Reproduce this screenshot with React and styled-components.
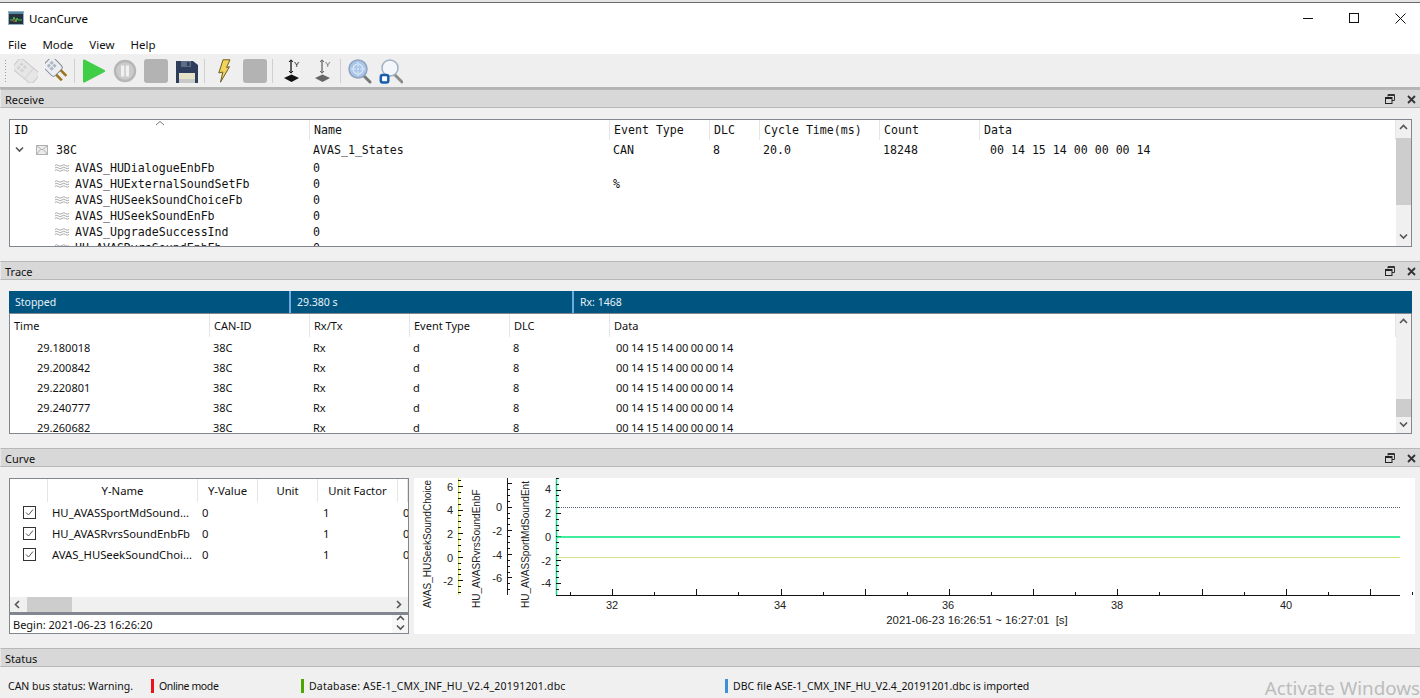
import React from 'react';
import styled, { createGlobalStyle } from 'styled-components';

const uiFont = `"Noto Sans", "Open Sans", "Liberation Sans", sans-serif`;
const monoFont = `"DejaVu Sans Mono", "Liberation Mono", monospace`;
const chartFont = `"Liberation Sans", Arial, sans-serif`;

const GlobalStyle = createGlobalStyle`
  html, body { margin: 0; padding: 0; background: #f0f0f0; }
  body { font-family: ${uiFont}; font-size: 11px; color: #111; overflow: hidden; }
`;

const Window = styled.div`
  position: relative;
  width: 1420px;
  height: 698px;
  overflow: hidden;
  background: #f0f0f0;
`;

const DesktopStrip = styled.div`
  height: 3px;
  box-sizing: border-box;
  background: #e4e4e4;
  border-bottom: 1px solid #6a6a6a;
`;

const TitleBar = styled.div`
  height: 30px;
  background: #fff;
  display: flex;
  align-items: center;
  padding-left: 8px;
`;

const TitleText = styled.span`
  margin-left: 5px;
  font-size: 11.5px;
  color: #000;
`;

const WindowButtons = styled.div`
  margin-left: auto;
  margin-right: -3px;
  display: flex;
`;

const WindowButton = styled.div`
  width: 46px;
  height: 30px;
  display: flex;
  align-items: center;
  justify-content: center;
`;

const MenuBar = styled.div`
  height: 22px;
  box-sizing: border-box;
  padding: 1px 0 0 8px;
  background: #fff;
  display: flex;
  align-items: center;
  gap: 16px;
  font-size: 11.5px;
  border-bottom: 1px solid #f0f0f0;
`;

const Toolbar = styled.div`
  height: 34px;
  display: flex;
  align-items: center;
  padding-left: 4px;
  box-sizing: border-box;
  border-bottom: 2px solid #b4b4b4;
  background: #efefef;
`;

const Grip = styled.div`
  width: 3px;
  height: 24px;
  margin-right: 3px;
  background-image: radial-gradient(#9a9a9a 1px, transparent 1px);
  background-size: 3px 3px;
`;

const ToolButton = styled.div`
  width: 31px;
  height: 28px;
  display: flex;
  align-items: center;
  justify-content: center;
`;

const ToolSeparator = styled.div`
  width: 1px;
  height: 24px;
  margin: 0 3px 0 2px;
  background: #cfcfcf;
`;

const DockHeader = styled.div`
  height: 19px;
  box-sizing: border-box;
  display: flex;
  align-items: center;
  padding: 1px 3px 0 4px;
  background: #d8d8d8;
  border-top: 1px solid #b8b8b8;
  border-bottom: 1px solid #b8b8b8;
  border-left: 1px solid #e8e8e8;
  font-size: 11px;
  color: #111;
`;

const DockControls = styled.div`
  margin-left: auto;
  display: flex;
  align-items: center;
  gap: 12px;
  padding-right: 1px;
`;

const DockBody = styled.div`
  height: ${p => p.$h}px;
  box-sizing: border-box;
  padding: ${p => p.$pad || '11px 8px 14px 9px'};
`;

const Frame = styled.div`
  height: ${p => (p.$h ? `${p.$h}px` : '100%')};
  box-sizing: border-box;
  border: 1px solid #82878f;
  background: #fff;
  display: flex;
  flex-direction: ${p => (p.$column ? 'column' : 'row')};
  overflow: hidden;
`;

const TableArea = styled.div`
  flex: 1;
  min-width: 0;
  min-height: 0;
  overflow: hidden;
  position: relative;
`;

const Row = styled.div`
  display: grid;
  grid-template-columns: ${p => p.$cols};
  height: ${p => p.$h}px;
  align-items: center;
  font-family: ${p => (p.$mono ? monoFont : uiFont)};
  font-size: ${p => (p.$mono ? '11.6px' : p.$size || '11px')};
  white-space: pre;
`;

const HeadCell = styled.div`
  height: 100%;
  box-sizing: border-box;
  display: flex;
  align-items: center;
  justify-content: ${p => (p.$center ? 'center' : 'flex-start')};
  padding-left: ${p => (p.$center ? 0 : 4)}px;
  border-right: 1px solid #e6e6e6;
  overflow: hidden;
`;

const Cell = styled.div`
  padding-left: ${p => p.$pl ?? 3}px;
  overflow: hidden;
  display: flex;
  align-items: center;
`;

const HexCell = styled(Cell)`
  word-spacing: -0.5px;
`;

const Spacer = styled.span`
  width: ${p => p.$w}px;
  flex: none;
`;

const SortMark = styled.svg`
  position: absolute;
  left: 145px;
  top: 0;
`;

const VScroll = styled.div`
  width: 15px;
  flex: none;
  background: #f0f0f0;
  display: flex;
  flex-direction: column;
  align-items: center;
`;

const ScrollEnd = styled.div`
  height: 17px;
  width: 100%;
  flex: none;
  display: flex;
  align-items: center;
  justify-content: center;
`;

const ScrollTrack = styled.div`
  flex: 1;
  width: 100%;
  padding-top: ${p => p.$top}px;
  box-sizing: border-box;
`;

const ScrollThumb = styled.div`
  width: 100%;
  height: ${p => p.$h}px;
  background: #cdcdcd;
`;

const TraceBar = styled.div`
  height: 22px;
  display: grid;
  grid-template-columns: 280px 283px 1fr;
  align-items: center;
  background: #005580;
  color: #e8f2f8;
  font-size: 10.5px;
  box-sizing: border-box;
`;

const TraceField = styled.div`
  height: 100%;
  padding-left: 6px;
  display: flex;
  align-items: center;
  box-sizing: border-box;
  ${p => !p.$first && 'border-left: 2px solid #6fa8dc;'}
`;

const CurveSplit = styled.div`
  display: flex;
  height: 156px;
  gap: 5px;
`;

const CurveLeft = styled.div`
  width: 400px;
  flex: none;
  display: flex;
  flex-direction: column;
`;

const CheckBox = styled.div`
  width: 11px;
  height: 11px;
  border: 1px solid #333;
  background: #fff;
  margin-left: 13px;
  display: flex;
  align-items: center;
  justify-content: center;
`;

const CurveRows = styled.div`
  overflow: hidden;
  box-sizing: border-box;
  width: 420px;
`;

const HScroll = styled.div`
  height: 15px;
  flex: none;
  background: #f0f0f0;
  display: flex;
  align-items: center;
`;

const HEnd = styled.div`
  width: 17px;
  height: 100%;
  flex: none;
  display: flex;
  align-items: center;
  justify-content: center;
  ${p => p.$end && 'margin-left: auto;'}
`;

const HThumb = styled.div`
  width: 45px;
  height: 100%;
  background: #cdcdcd;
`;

const BeginBox = styled.div`
  height: 21px;
  box-sizing: border-box;
  border: 1px solid #82878f;
  border-top-width: 2px;
  background: #fff;
  display: flex;
  align-items: center;
  padding-left: 3px;
  font-size: 11px;
  overflow: hidden;
`;

const Spinner = styled.div`
  margin-left: auto;
  width: 16px;
  height: 100%;
  display: flex;
  flex-direction: column;
  align-items: center;
  justify-content: space-between;
  background: #f7f7f7;
`;

const ChartPanel = styled.div`
  flex: 1;
  background: #fff;
  overflow: hidden;
`;

const StatusRow = styled.div`
  height: 31px;
  display: flex;
  align-items: center;
  font-size: 10.5px;
  padding-top: 6px;
  box-sizing: border-box;
`;

const StatusItem = styled.div`
  width: ${p => p.$w}px;
  box-sizing: border-box;
  flex: none;
  display: flex;
  align-items: center;
  height: 14px;
  padding-left: ${p => (p.$color ? 5 : 8)}px;
  letter-spacing: ${p => p.$spacing || 0}px;
  ${p => p.$color && `border-left: 3px solid ${p.$color};`}
  white-space: nowrap;
`;

const Watermark = styled.div`
  position: absolute;
  right: 0;
  top: 675px;
  font-size: 18.8px;
  color: #bcbcbc;
  white-space: nowrap;
`;

const AppIcon = () => (
  <svg width="16" height="14" viewBox="0 0 16 14">
    <rect x="0" y="0" width="16" height="14" fill="#8fb4c8" />
    <rect x="1" y="1" width="14" height="12" fill="#26323c" />
    <rect x="1" y="1" width="14" height="2" fill="#5b87a3" />
    <path d="M2 9h3l1-3 2 5 1-4 1 2h4" stroke="#49c24a" strokeWidth="1" fill="none" />
    <path d="M5 9l1 2 2-3" stroke="#d9433c" strokeWidth="0.8" fill="none" />
  </svg>
);

const MinIcon = () => (
  <svg width="10" height="10"><path d="M0 5.5h10" stroke="#111" strokeWidth="1" /></svg>
);
const MaxIcon = () => (
  <svg width="10" height="10"><rect x="0.5" y="0.5" width="9" height="9" fill="none" stroke="#111" /></svg>
);
const CloseIcon = () => (
  <svg width="11" height="11"><path d="M0.5 0.5l10 10M10.5 0.5l-10 10" stroke="#111" strokeWidth="1" /></svg>
);

const FloatIcon = () => (
  <svg width="10" height="10" viewBox="0 0 10 10">
    <path d="M3 2.5V.5h6.5v6H7" fill="none" stroke="#333" />
    <path d="M3 1.5h6" stroke="#333" />
    <rect x="0.5" y="3.5" width="6.5" height="6" fill="none" stroke="#222" />
    <path d="M0.5 4.5h6.5" stroke="#222" />
  </svg>
);
const DockClose = () => (
  <svg width="9" height="9" viewBox="0 0 9 9">
    <path d="M1 1l7 7M8 1L1 8" stroke="#333" strokeWidth="1.8" />
  </svg>
);

const Chevron = ({ dir = 'down', color = '#555' }) => {
  const paths = {
    down: 'M1 1.5l3.5 3.5 3.5-3.5',
    up: 'M1 5l3.5-3.5L8 5',
    left: 'M5 1L1.5 4.5 5 8',
    right: 'M2 1l3.5 3.5L2 8',
  };
  return (
    <svg width="9" height="9" viewBox="0 0 9 9" style={{ display: 'block' }}>
      <path d={paths[dir]} fill="none" stroke={color} strokeWidth="1.6" />
    </svg>
  );
};

const PlugGrey = () => (
  <svg width="24" height="24" viewBox="0 0 24 24">
    <g transform="rotate(-50 12 12)">
      <rect x="5" y="-1" width="14" height="26" rx="4" fill="#e6e6e6" stroke="#cacaca" />
      <rect x="8.5" y="3" width="7" height="7" fill="#d2d2d2" />
      <path d="M12 3v7M8.5 6.5h7" stroke="#f2f2f2" />
      <path d="M5.5 16h13" stroke="#d4d4d4" />
    </g>
  </svg>
);

const PlugColor = () => (
  <svg width="24" height="24" viewBox="0 0 24 24">
    <g transform="rotate(-45 12 12)">
      <rect x="5" y="-2" width="14" height="16" rx="3" fill="#eceef1" stroke="#808a98" />
      <rect x="8.5" y="1" width="7" height="7" fill="#aeb6c2" />
      <path d="M12 1v7M8.5 4.5h7" stroke="#eef0f3" />
      <rect x="7.5" y="14" width="2.6" height="8" fill="#9a7420" />
      <rect x="13.9" y="14" width="2.6" height="8" fill="#9a7420" />
    </g>
  </svg>
);

const PlayIcon = () => (
  <svg width="24" height="26" viewBox="0 0 24 26">
    <path d="M1 2.5c0-1 1-1.4 2-.8l19.500 10.300c.9.500.9 1.500 0 2L3 24.300c-1 .6-2 .2-2-.8z" fill="#3fce46" />
  </svg>
);

const PauseIcon = () => (
  <svg width="24" height="24" viewBox="0 0 24 24">
    <circle cx="12" cy="12" r="10" fill="#cbcbcb" stroke="#b6b6b6" strokeWidth="2.4" />
    <rect x="8" y="6.5" width="3.2" height="11" fill="#f1f1f1" />
    <rect x="12.8" y="6.5" width="3.2" height="11" fill="#f1f1f1" />
  </svg>
);

const StopIcon = () => (
  <svg width="24" height="24" viewBox="0 0 24 24">
    <rect x="0" y="0" width="24" height="24" rx="3" fill="#b3b3b3" />
  </svg>
);

const SaveIcon = () => (
  <svg width="22" height="23" viewBox="0 0 22 23">
    <path d="M0 1h17l5 4v18H0z" fill="#2e3d5c" />
    <rect x="5" y="1" width="10" height="6" fill="#5e6b85" />
    <rect x="11" y="2" width="2.5" height="4" fill="#2e3d5c" />
    <rect x="3" y="13" width="16" height="10" fill="#e6e2c8" />
    <rect x="3" y="19" width="16" height="4" fill="#c9c9c9" />
  </svg>
);

const BoltIcon = () => (
  <svg width="14" height="24" viewBox="0 0 14 24">
    <path d="M6 .8h7L9.5 8.5l3-.8L3.5 23.200 5.800 13 1.800 14z" fill="#f2d45c" stroke="#6e5c22" strokeWidth="1" />
  </svg>
);

const YAxisIcon = ({ color }) => (
  <svg width="16" height="24" viewBox="0 0 16 24">
    <path d="M7 1v13" stroke={color} strokeWidth="1.3" />
    <path d="M5 3l2-2.200 2 2.200M5 12l2 2.200 2-2.200" fill="none" stroke={color} strokeWidth="1" />
    <text x="10" y="8" fill={color} style={{ fontFamily: chartFont, fontSize: 8 }}>Y</text>
    <path d="M0 19l7.500-3.500L15 19l-7.500 4z" fill={color} />
  </svg>
);

const ZoomInIcon = () => (
  <svg width="24" height="25" viewBox="0 0 24 25">
    <path d="M15 16l7 7" stroke="#777" strokeWidth="3" strokeLinecap="round" />
    <circle cx="10" cy="10" r="9" fill="#a9c6ea" stroke="#8fa4bf" strokeWidth="1.5" />
    <circle cx="10" cy="10" r="5" fill="none" stroke="#dfe9f6" strokeWidth="1.2" />
    <path d="M3 10h14M10 3v14" stroke="#dfe9f6" strokeWidth="1" strokeDasharray="2 1" />
  </svg>
);

const ZoomOutIcon = () => (
  <svg width="24" height="25" viewBox="0 0 24 25">
    <path d="M15 15l8 8" stroke="#8b8b8b" strokeWidth="3" strokeLinecap="round" />
    <circle cx="11" cy="9" r="8" fill="#f3f6fa" stroke="#9fb0c6" strokeWidth="1.5" />
    <rect x="1.8" y="16" width="7.5" height="7.5" rx="2" fill="#fff" stroke="#1a5fae" strokeWidth="2.5" />
  </svg>
);

const MessageIcon = () => (
  <svg width="12" height="10" viewBox="0 0 12 10" style={{ display: 'block' }}>
    <rect x="0.5" y="0.5" width="11" height="9" fill="#ececec" stroke="#b0b0b0" />
    <path d="M.5 .5l5.500 4.500L11.500 .5M.5 9.500l4-5M11.500 9.500l-4-5" fill="none" stroke="#b0b0b0" />
  </svg>
);

const SignalIcon = () => (
  <svg width="14" height="8" viewBox="0 0 14 8" style={{ display: 'block' }}>
    <path d="M0 1.500q1.750-1.500 3.500 0t3.500 0 3.500 0 3.500 0M0 4q1.750-1.500 3.500 0t3.500 0 3.500 0 3.500 0M0 6.500q1.750-1.500 3.500 0t3.500 0 3.500 0 3.500 0" fill="none" stroke="#a8a8a8" strokeWidth="1" />
  </svg>
);

const CheckMark = () => (
  <svg width="9" height="9" viewBox="0 0 9 9">
    <path d="M1 4.500l2.500 2.500L8 1.500" fill="none" stroke="#555" strokeWidth="1" />
  </svg>
);

const receiveCols = '300px 300px 100px 50px 120px 100px 1fr';
const traceCols = '200px 100px 100px 100px 100px 1fr';
const curveCols = '38px 150px 60px 60px 80px 1fr';

const signals = [
  ['AVAS_HUDialogueEnbFb', '0', ''],
  ['AVAS_HUExternalSoundSetFb', '0', '%'],
  ['AVAS_HUSeekSoundChoiceFb', '0', ''],
  ['AVAS_HUSeekSoundEnFb', '0', ''],
  ['AVAS_UpgradeSuccessInd', '0', ''],
  ['HU_AVASRvrsSoundEnbFb', '0', ''],
];

const traces = ['29.180018', '29.200842', '29.220801', '29.240777', '29.260682', '29.280700'];

const curves = [
  ['HU_AVASSportMdSound...', '0', '1', '0'],
  ['HU_AVASRvrsSoundEnbFb', '0', '1', '0'],
  ['AVAS_HUSeekSoundChoi...', '0', '1', '0'],
];

const DockTitle = ({ title, controls = true }) => (
  <DockHeader>
    {title}
    {controls && (
      <DockControls>
        <FloatIcon />
        <DockClose />
      </DockControls>
    )}
  </DockHeader>
);

const ScrollBar = ({ top, thumb }) => (
  <VScroll>
    <ScrollEnd><Chevron dir="up" /></ScrollEnd>
    <ScrollTrack $top={top}><ScrollThumb $h={thumb} /></ScrollTrack>
    <ScrollEnd><Chevron dir="down" /></ScrollEnd>
  </VScroll>
);

const AxisTicks = ({ x, top, step, count, major }) => (
  <g stroke="#111" strokeWidth="1">
    {Array.from({ length: count }, (_, i) => {
      const y = Math.round(top + i * step) + 0.5;
      return <line key={i} x1={x} x2={x + (i % 4 === major ? 5 : 3)} y1={y} y2={y} />;
    })}
  </g>
);

// chart coordinates: x - 414, y - 478
const Chart = () => {
  const labelStyle = { fontFamily: chartFont, fontSize: 11, fill: '#222' };
  const nameStyle = { ...labelStyle, fontSize: 10 };
  const xLabels = [[198, '32'], [366, '34'], [534, '36'], [703, '38'], [872, '40']];
  return (
    <svg width="1001" height="156" viewBox="0 0 1001 156" style={{ display: 'block' }}>
      <text transform="translate(17 130) rotate(-90)" style={nameStyle}>AVAS_HUSeekSoundChoice</text>
      <text transform="translate(66 130) rotate(-90)" style={nameStyle}>HU_AVASRvrsSoundEnbF</text>
      <text transform="translate(115 130) rotate(-90)" style={nameStyle}>HU_AVASSportMdSoundEnt</text>

      {[[6, 13], [4, 36], [2, 60], [0, 84], [-2, 107]].map(([v, y]) => (
        <text key={v} x="39" y={y} textAnchor="end" style={labelStyle}>{v}</text>
      ))}
      <line x1="44.5" x2="44.5" y1="0" y2="117" stroke="#c8e614" />
      <AxisTicks x={44} top={2} step={5.9} count={20} major={1} />

      {[[0, 33], [-2, 57], [-4, 81], [-6, 104]].map(([v, y]) => (
        <text key={v} x="88" y={y} textAnchor="end" style={labelStyle}>{v}</text>
      ))}
      <line x1="93.5" x2="93.5" y1="0" y2="117" stroke="#222" />
      <AxisTicks x={93} top={5} step={5.9} count={19} major={0} />

      {[[4, 15], [2, 39], [0, 63], [-2, 87], [-4, 109]].map(([v, y]) => (
        <text key={v} x="137" y={y} textAnchor="end" style={labelStyle}>{v}</text>
      ))}
      <line x1="142.5" x2="142.5" y1="0" y2="117" stroke="#12d68c" strokeWidth="1.5" />
      <AxisTicks x={142} top={0} step={5.83} count={20} major={2} />

      <line x1="143" x2="986" y1="29.5" y2="29.5" stroke="#55606e" strokeDasharray="1 1" />
      <line x1="143" x2="986" y1="59" y2="59" stroke="#00e87a" strokeWidth="1.5" />
      <line x1="143" x2="986" y1="79.5" y2="79.5" stroke="#d4e88a" />

      <line x1="142" x2="986" y1="117.5" y2="117.5" stroke="#111" />
      {Array.from({ length: 21 }, (_, i) => {
        const x = Math.round(156 + i * 42.1) + 0.5;
        const major = i % 2 === 1;
        return <line key={i} x1={x} x2={x} y1={major ? 111 : 114} y2="117" stroke="#111" />;
      })}
      {xLabels.map(([x, t]) => (
        <text key={t} x={x} y="131" textAnchor="middle" style={labelStyle}>{t}</text>
      ))}
      <text x="563" y="146" textAnchor="middle" style={{ ...labelStyle, fontSize: 11.4 }} xmlSpace="preserve">
        2021-06-23 16:26:51 ~ 16:27:01  [s]
      </text>
    </svg>
  );
};

const App = () => (
  <Window>
    <GlobalStyle />
    <DesktopStrip />
    <TitleBar>
      <AppIcon />
      <TitleText>UcanCurve</TitleText>
      <WindowButtons>
        <WindowButton><MinIcon /></WindowButton>
        <WindowButton><MaxIcon /></WindowButton>
        <WindowButton><CloseIcon /></WindowButton>
      </WindowButtons>
    </TitleBar>
    <MenuBar>
      <span>File</span>
      <span>Mode</span>
      <span>View</span>
      <span>Help</span>
    </MenuBar>
    <Toolbar>
      <Grip />
      <ToolButton><PlugGrey /></ToolButton>
      <ToolButton><PlugColor /></ToolButton>
      <ToolSeparator />
      <ToolButton><PlayIcon /></ToolButton>
      <ToolButton><PauseIcon /></ToolButton>
      <ToolButton><StopIcon /></ToolButton>
      <ToolButton><SaveIcon /></ToolButton>
      <ToolSeparator />
      <ToolButton><BoltIcon /></ToolButton>
      <ToolButton><StopIcon /></ToolButton>
      <ToolSeparator />
      <ToolButton><YAxisIcon color="#111" /></ToolButton>
      <ToolButton><YAxisIcon color="#666" /></ToolButton>
      <ToolSeparator />
      <ToolButton><ZoomInIcon /></ToolButton>
      <ToolButton><ZoomOutIcon /></ToolButton>
    </Toolbar>

    <DockTitle title="Receive" />
    <DockBody $h={153}>
      <Frame>
        <TableArea>
          <SortMark width="10" height="6" viewBox="0 0 10 6">
            <path d="M1 5l4-3.5L9 5" fill="none" stroke="#777" />
          </SortMark>
          <Row $mono $cols={receiveCols} $h={20}>
            <HeadCell>ID</HeadCell>
            <HeadCell>Name</HeadCell>
            <HeadCell>Event Type</HeadCell>
            <HeadCell>DLC</HeadCell>
            <HeadCell>Cycle Time(ms)</HeadCell>
            <HeadCell>Count</HeadCell>
            <HeadCell>Data</HeadCell>
          </Row>
          <Row $mono $cols={receiveCols} $h={20}>
            <Cell $pl={5}>
              <Chevron dir="down" />
              <Spacer $w={12} />
              <MessageIcon />
              <Spacer $w={8} />
              38C
            </Cell>
            <Cell>AVAS_1_States</Cell>
            <Cell>CAN</Cell>
            <Cell>8</Cell>
            <Cell>20.0</Cell>
            <Cell>18248</Cell>
            <Cell $pl={10}>00 14 15 14 00 00 00 14</Cell>
          </Row>
          {signals.map(([name, value, unit]) => (
            <Row $mono $cols={receiveCols} $h={16} key={name}>
              <Cell $pl={45}><SignalIcon /><Spacer $w={6} />{name}</Cell>
              <Cell>{value}</Cell>
              <Cell>{unit}</Cell>
              <Cell /><Cell /><Cell /><Cell />
            </Row>
          ))}
        </TableArea>
        <ScrollBar top={1} thumb={67} />
      </Frame>
    </DockBody>

    <DockTitle title="Trace" />
    <DockBody $h={168} $pad="11px 8px 0 9px">
      <TraceBar>
        <TraceField $first>Stopped</TraceField>
        <TraceField>29.380 s</TraceField>
        <TraceField>Rx: 1468</TraceField>
      </TraceBar>
      <Frame $h={121}>
        <TableArea>
          <Row $cols={traceCols} $h={23}>
            <HeadCell>Time</HeadCell>
            <HeadCell>CAN-ID</HeadCell>
            <HeadCell>Rx/Tx</HeadCell>
            <HeadCell>Event Type</HeadCell>
            <HeadCell>DLC</HeadCell>
            <HeadCell>Data</HeadCell>
          </Row>
          {traces.map(t => (
            <Row $cols={traceCols} $h={20} key={t}>
              <Cell $pl={27}>{t}</Cell>
              <Cell>38C</Cell>
              <Cell>Rx</Cell>
              <Cell>d</Cell>
              <Cell>8</Cell>
              <HexCell $pl={6}>00 14 15 14 00 00 00 14</HexCell>
            </Row>
          ))}
        </TableArea>
        <ScrollBar top={68} thumb={18} />
      </Frame>
    </DockBody>

    <DockTitle title="Curve" />
    <DockBody $h={181} $pad="11px 5px 0 9px">
      <CurveSplit>
        <CurveLeft>
          <Frame $h={135} $column>
            <TableArea>
              <Row $cols={curveCols} $h={23} $size="11.3px">
                <HeadCell />
                <HeadCell $center>Y-Name</HeadCell>
                <HeadCell $center>Y-Value</HeadCell>
                <HeadCell $center>Unit</HeadCell>
                <HeadCell $center>Unit Factor</HeadCell>
                <HeadCell />
              </Row>
              <CurveRows>
                {curves.map(([name, value, factor, offset]) => (
                  <Row $cols={curveCols} $h={21} $size="11.3px" key={name}>
                    <CheckBox><CheckMark /></CheckBox>
                    <Cell $pl={4}>{name}</Cell>
                    <Cell $pl={4}>{value}</Cell>
                    <Cell />
                    <Cell $pl={5}>{factor}</Cell>
                    <Cell $pl={5}>{offset}</Cell>
                  </Row>
                ))}
              </CurveRows>
            </TableArea>
            <HScroll>
              <HEnd><Chevron dir="left" /></HEnd>
              <HThumb />
              <HEnd $end><Chevron dir="right" /></HEnd>
            </HScroll>
          </Frame>
          <BeginBox>
            Begin: 2021-06-23 16:26:20
            <Spinner>
              <Chevron dir="up" />
              <Chevron dir="down" />
            </Spinner>
          </BeginBox>
        </CurveLeft>
        <ChartPanel><Chart /></ChartPanel>
      </CurveSplit>
    </DockBody>

    <DockTitle title="Status" controls={false} />
    <StatusRow>
      <StatusItem $w={151}>CAN bus status: Warning.</StatusItem>
      <StatusItem $w={150} $color="#e8151b" $spacing={-0.4}>Online mode</StatusItem>
      <StatusItem $w={424} $color="#4ea600" $spacing={0.2}>Database: ASE-1_CMX_INF_HU_V2.4_20191201.dbc</StatusItem>
      <StatusItem $w={500} $color="#3f8fd8">DBC file ASE-1_CMX_INF_HU_V2.4_20191201.dbc is imported</StatusItem>
    </StatusRow>
    <Watermark>Activate Windows</Watermark>
  </Window>
);

export default App;
